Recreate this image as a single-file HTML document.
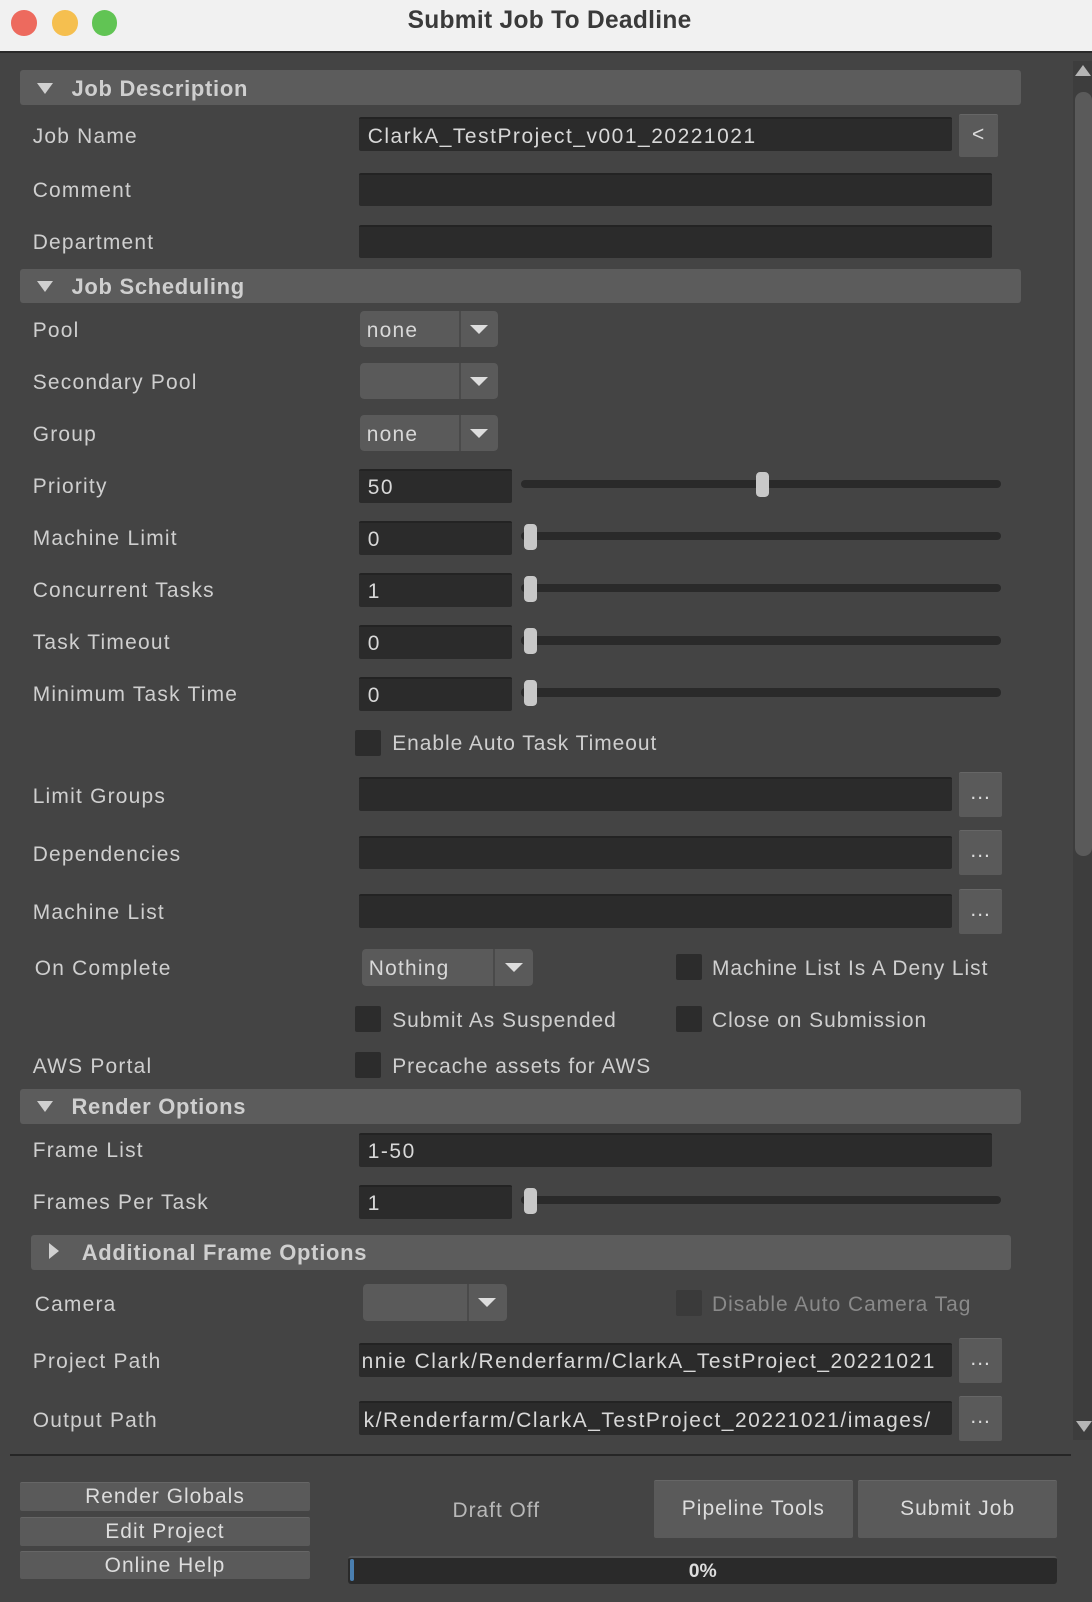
<!DOCTYPE html>
<html><head><meta charset="utf-8"><style>
html,body{margin:0;padding:0;background:#444;width:1092px;height:1602px;overflow:hidden}
#w{position:relative;width:1069px;height:1568px;zoom:1.0215;background:#444;font-family:"Liberation Sans",sans-serif;color:#cfcfcf}
.a{position:absolute}
.t{position:absolute;font-size:20.5px;line-height:24px;color:#cfcfcf;white-space:nowrap;letter-spacing:1.2px;margin-top:2px}
.ck{letter-spacing:0.95px}
.hdr{position:absolute;background:#5c5c5c;border-radius:3px;height:34px}
.hdr span{position:absolute;left:50px;top:5px;font-weight:bold;font-size:21.5px;color:#cfcfcf;letter-spacing:0.7px}
.tri{position:absolute;left:16px;top:12px;width:0;height:0;border-left:8px solid transparent;border-right:8px solid transparent;border-top:11px solid #d0d0d0}
.in{position:absolute;background:#2b2b2b;border-top:2px solid #232323;border-radius:2px;box-sizing:border-box}
.in span{position:absolute;left:9px;top:5px;font-size:20.5px;color:#d8d8d8;white-space:nowrap;letter-spacing:1.5px}
.btn{position:absolute;background:#5a5a5a;border-top:1px solid #666;box-sizing:border-box;color:#ddd;text-align:center;font-size:20.5px;letter-spacing:1px;border-radius:2px}
.cb{position:absolute;background:#2c2c2c;width:25px;height:25px;border-radius:2px}
.combo{position:absolute;background:#5a5a5a;border-radius:4px;height:36px}
.combo .dv{position:absolute;top:0;bottom:0;width:2px;background:#4a4a4a}
.combo .ar{position:absolute;top:14px;width:0;height:0;border-left:9px solid transparent;border-right:9px solid transparent;border-top:9px solid #ddd}
.combo span{position:absolute;left:7px;top:8px;font-size:20.5px;color:#d8d8d8;letter-spacing:1.2px}
.tr{position:absolute;left:510px;width:470px;height:8px;background:#2a2a2a;border-radius:4px}
.hd{position:absolute;width:13px;height:25px;background:#c8c8c8;border-radius:4px}
</style></head><body><div id="w">
<div class="a" style="left:0;top:0;width:1069px;height:50px;background:#f1f1f1;border-bottom:2px solid #2a2a2a"></div>
<div class="a" style="left:11px;top:10px;width:25px;height:25px;border-radius:50%;background:#ed6a5e"></div>
<div class="a" style="left:51px;top:10px;width:25px;height:25px;border-radius:50%;background:#f5bf4f"></div>
<div class="a" style="left:90px;top:10px;width:25px;height:25px;border-radius:50%;background:#61c454"></div>
<div class="a" style="left:0;width:1076px;top:7px;text-align:center;font-weight:bold;font-size:24px;color:#3a3a3a;letter-spacing:0.3px">Submit Job To Deadline</div>

<div class="a" style="left:1050px;top:60px;width:19px;height:1350px;background:#3d3d3d"></div>
<div class="a" style="left:1052px;top:64px;border-left:8px solid transparent;border-right:8px solid transparent;border-bottom:11px solid #b5b5b5;width:0;height:0"></div>
<div class="a" style="left:1052px;top:90px;width:17px;height:748px;background:#5a5a5a;border-radius:8px"></div>
<div class="a" style="left:1053px;top:1391px;border-left:8px solid transparent;border-right:8px solid transparent;border-top:11px solid #b5b5b5;width:0;height:0"></div>

<div class="hdr" style="left:20px;top:69px;width:980px"><div class="tri"></div><span>Job Description</span></div>
<div class="t" style="left:32px;top:120px">Job Name</div>
<div class="in" style="left:351px;top:115px;width:581px;height:33px"><span>ClarkA_TestProject_v001_20221021</span></div>
<div class="btn" style="left:939px;top:112px;width:38px;height:42px;line-height:40px">&lt;</div>
<div class="t" style="left:32px;top:173px">Comment</div>
<div class="in" style="left:351px;top:169px;width:620px;height:33px"></div>
<div class="t" style="left:32px;top:224px">Department</div>
<div class="in" style="left:351px;top:220px;width:620px;height:33px"></div>

<div class="hdr" style="left:20px;top:263px;width:980px"><div class="tri"></div><span>Job Scheduling</span></div>
<div class="t" style="left:32px;top:310px">Pool</div>
<div class="combo" style="left:352px;top:304px;width:136px"><span>none</span><div class="dv" style="left:97px"></div><div class="ar" style="left:108px"></div></div>
<div class="t" style="left:32px;top:361px">Secondary Pool</div>
<div class="combo" style="left:352px;top:355px;width:136px"><div class="dv" style="left:97px"></div><div class="ar" style="left:108px"></div></div>
<div class="t" style="left:32px;top:412px">Group</div>
<div class="combo" style="left:352px;top:406px;width:136px"><span>none</span><div class="dv" style="left:97px"></div><div class="ar" style="left:108px"></div></div>

<div class="t" style="left:32px;top:463px">Priority</div>
<div class="in" style="left:351px;top:459px;width:150px;height:33px"><span>50</span></div>
<div class="tr" style="top:470px"></div><div class="hd" style="left:740px;top:462px"></div>
<div class="t" style="left:32px;top:514px">Machine Limit</div>
<div class="in" style="left:351px;top:510px;width:150px;height:33px"><span>0</span></div>
<div class="tr" style="top:521px"></div><div class="hd" style="left:513px;top:513px"></div>
<div class="t" style="left:32px;top:565px">Concurrent Tasks</div>
<div class="in" style="left:351px;top:561px;width:150px;height:33px"><span>1</span></div>
<div class="tr" style="top:572px"></div><div class="hd" style="left:513px;top:564px"></div>
<div class="t" style="left:32px;top:616px">Task Timeout</div>
<div class="in" style="left:351px;top:612px;width:150px;height:33px"><span>0</span></div>
<div class="tr" style="top:623px"></div><div class="hd" style="left:513px;top:615px"></div>
<div class="t" style="left:32px;top:667px">Minimum Task Time</div>
<div class="in" style="left:351px;top:663px;width:150px;height:33px"><span>0</span></div>
<div class="tr" style="top:674px"></div><div class="hd" style="left:513px;top:666px"></div>

<div class="cb" style="left:348px;top:715px"></div><div class="t ck" style="left:384px;top:715px">Enable Auto Task Timeout</div>
<div class="t" style="left:32px;top:766px">Limit Groups</div>
<div class="in" style="left:351px;top:761px;width:581px;height:33px"></div>
<div class="btn" style="left:939px;top:756px;width:42px;height:44px;line-height:40px">...</div>
<div class="t" style="left:32px;top:823px">Dependencies</div>
<div class="in" style="left:351px;top:818px;width:581px;height:33px"></div>
<div class="btn" style="left:939px;top:813px;width:42px;height:44px;line-height:40px">...</div>
<div class="t" style="left:32px;top:880px">Machine List</div>
<div class="in" style="left:351px;top:875px;width:581px;height:33px"></div>
<div class="btn" style="left:939px;top:870px;width:42px;height:44px;line-height:40px">...</div>

<div class="t" style="left:34px;top:935px">On Complete</div>
<div class="combo" style="left:354px;top:929px;width:168px"><span>Nothing</span><div class="dv" style="left:129px"></div><div class="ar" style="left:140px"></div></div>
<div class="cb" style="left:662px;top:934px"></div><div class="t ck" style="left:697px;top:935px">Machine List Is A Deny List</div>
<div class="cb" style="left:348px;top:985px"></div><div class="t ck" style="left:384px;top:986px">Submit As Suspended</div>
<div class="cb" style="left:662px;top:985px"></div><div class="t ck" style="left:697px;top:986px">Close on Submission</div>
<div class="t" style="left:32px;top:1031px">AWS Portal</div>
<div class="cb" style="left:348px;top:1030px"></div><div class="t ck" style="left:384px;top:1031px">Precache assets for AWS</div>

<div class="hdr" style="left:20px;top:1066px;width:980px"><div class="tri"></div><span>Render Options</span></div>
<div class="t" style="left:32px;top:1113px">Frame List</div>
<div class="in" style="left:351px;top:1109px;width:620px;height:33px"><span>1-50</span></div>
<div class="t" style="left:32px;top:1164px">Frames Per Task</div>
<div class="in" style="left:351px;top:1160px;width:150px;height:33px"><span>1</span></div>
<div class="tr" style="top:1171px"></div><div class="hd" style="left:513px;top:1163px"></div>

<div class="hdr" style="left:30px;top:1209px;width:960px"><div class="a" style="left:18px;top:8px;border-top:8px solid transparent;border-bottom:8px solid transparent;border-left:10px solid #d0d0d0;width:0;height:0"></div><span>Additional Frame Options</span></div>
<div class="t" style="left:34px;top:1264px">Camera</div>
<div class="combo" style="left:355px;top:1257px;width:141px"><div class="dv" style="left:102px"></div><div class="ar" style="left:113px"></div></div>
<div class="cb" style="left:662px;top:1263px;background:#3a3a3a"></div><div class="t ck" style="left:697px;top:1264px;color:#8a8a8a">Disable Auto Camera Tag</div>
<div class="t" style="left:32px;top:1320px">Project Path</div>
<div class="in" style="left:351px;top:1315px;width:581px;height:33px;overflow:hidden"><span style="left:3px">nnie Clark/Renderfarm/ClarkA_TestProject_20221021</span></div>
<div class="btn" style="left:939px;top:1310px;width:42px;height:44px;line-height:40px">...</div>
<div class="t" style="left:32px;top:1377px">Output Path</div>
<div class="in" style="left:351px;top:1372px;width:581px;height:33px;overflow:hidden"><span style="left:5px">k/Renderfarm/ClarkA_TestProject_20221021/images/</span></div>
<div class="btn" style="left:939px;top:1367px;width:42px;height:44px;line-height:40px">...</div>

<div class="a" style="left:10px;top:1423px;width:1038px;height:2px;background:#262626"></div>
<div class="btn" style="left:20px;top:1451px;width:283px;height:28px;line-height:27px">Render Globals</div>
<div class="btn" style="left:20px;top:1485px;width:283px;height:28px;line-height:27px">Edit Project</div>
<div class="btn" style="left:20px;top:1518px;width:283px;height:28px;line-height:27px">Online Help</div>
<div class="t ck" style="left:443px;top:1465px;color:#b8b8b8">Draft Off</div>
<div class="btn" style="left:640px;top:1449px;width:195px;height:57px;line-height:55px">Pipeline Tools</div>
<div class="btn" style="left:840px;top:1449px;width:195px;height:57px;line-height:55px">Submit Job</div>
<div class="a" style="left:341px;top:1523px;width:694px;height:28px;background:#2a2a2a;border-top:2px solid #555;border-radius:3px;box-sizing:border-box"></div>
<div class="a" style="left:343px;top:1526px;width:4px;height:22px;background:#4a7fb0;border-radius:2px"></div>
<div class="a" style="left:341px;width:694px;top:1527px;text-align:center;font-size:19px;color:#ddd;font-weight:bold">0%</div>
</div></body></html>
